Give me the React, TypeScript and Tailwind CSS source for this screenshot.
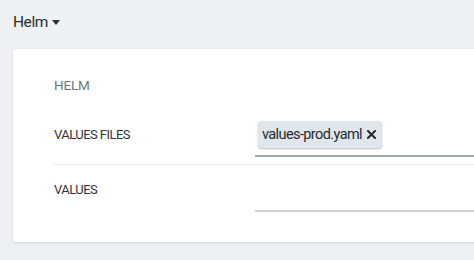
import React from "react";

export default function App() {
  return (
    <div className="w-[474px] h-[260px] overflow-hidden bg-[#eef1f4] font-['Roboto',sans-serif]">
      <div className="pl-[13px] pt-[12px] h-[49px]">
        <button className="flex items-center gap-[4px] text-[15.5px] tracking-[-0.45px] text-[#2b2f33] leading-[20px]">
          Helm
          <svg width="8" height="5" viewBox="0 0 8 5" className="mt-[1px]">
            <path d="M0 0 L8 0 L4 5 Z" fill="#2b2f33" />
          </svg>
        </button>
      </div>
      <div className="ml-[13px] w-[480px] h-[193px] bg-white rounded-[3px] shadow-[0_1px_3px_rgba(0,0,0,0.12)] pl-[41px] pt-[28px]">
        <div className="text-[13.5px] tracking-[-0.2px] text-[#6c7780] leading-[17px]">HELM</div>
        <div className="flex mt-[16px] h-[47px]">
          <div className="w-[201px] pt-[17px] text-[13px] tracking-[-0.55px] text-[#2f3337] leading-[16px]">VALUES FILES</div>
          <div className="flex-1 h-[47px] border-b-[2px] border-[#9eaab0] flex items-start pl-[3px] pt-[11px]">
            <span className="inline-flex items-center gap-[5px] h-[27px] pl-[4px] pr-[6px] rounded-[4px] bg-[#dfe6ec] shadow-[0_1px_2px_rgba(0,0,0,0.28)] text-[14.5px] tracking-[-0.6px] text-[#262a2e]">
              values-prod.yaml
              <svg width="9" height="9" viewBox="0 0 9 9">
                <path d="M1 1 L8 8 M8 1 L1 8" stroke="#262a2e" strokeWidth="2" strokeLinecap="square" />
              </svg>
            </span>
          </div>
        </div>
        <div className="h-[1px] bg-[#e8eaec] mt-[7px]" />
        <div className="flex h-[47px]">
          <div className="w-[201px] text-[13px] tracking-[-0.55px] text-[#2f3337] leading-[16px] pt-[17px]">VALUES</div>
          <div className="flex-1 border-b-[2px] border-[#cfcfcf]" />
        </div>
      </div>
    </div>
  );
}
